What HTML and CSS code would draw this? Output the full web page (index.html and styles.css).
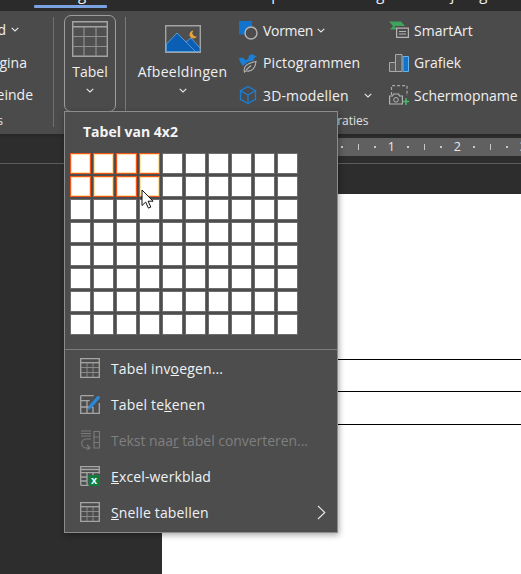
FILE: index.html
```html
<!DOCTYPE html>
<html lang="nl">
<head>
<meta charset="utf-8">
<title>Tabel invoegen</title>
<link rel="stylesheet" href="styles.css">
</head>
<body>
<div class="app">
  <div class="tabs">
    <span class="tab-frag f1">g</span><span class="tab-frag f2">p</span><span class="tab-frag f3">g</span><span class="tab-frag f4">j</span><span class="tab-frag f5">g</span>
    <i class="tab-bar"></i>
  </div>

  <div class="ribbon">
    <div class="pages">
      <div class="pages-row first">Voorblad<svg class="chev side" viewBox="0 0 8 5"><path d="M.7.8 4 4 7.3.8"/></svg></div>
      <div class="pages-row second">Lege pagina</div>
      <div class="pages-row">Pagina-einde</div>
      <div class="pages-label">Pagina's</div>
    </div>
    <i class="sep"></i>
    <div class="big-btn table-btn">
      <svg class="big-ico" width="36" height="36" viewBox="0 0 36 36"><path fill="#505050" d="M0 0h36v36H0z"/><path fill="none" stroke="#a3a3a3" stroke-width="1.4" d="M.7.7h34.6v34.6H.7zM.7 5.7h34.6"/><path fill="none" stroke="#8f8f8f" stroke-width="1.2" d="M12 6v29M24 6v29M1 15.500h34M1 25.500h34"/></svg>
      <span class="big-label">Tabel</span>
      <svg class="chev" viewBox="0 0 8 5"><path d="M.7.8 4 4 7.3.8"/></svg>
    </div>
    <i class="sep short"></i>
    <div class="big-btn pic-btn">
      <svg class="big-ico" width="36" height="28" viewBox="0 0 36 28"><path fill="#4f4f4f" stroke="#a3a3a3" stroke-width="1.4" d="M.7.7h34.600v26.600H.7z"/><path fill="#0a5fb4" stroke="#5ba3dc" stroke-width=".9" d="M1.500 26.500V19L12 8l9 9 5-4 9 10v3.500z"/><path stroke="#5ba3dc" fill="none" stroke-width=".9" d="M21 17l9.500 9.500"/><path fill="#e8a33d" d="M28.500 5.500a4 4 0 1 0 3.500 6 3.600 3.600 0 0 1-3.500-6z"/></svg>
      <span class="big-label">Afbeeldingen</span>
      <svg class="chev" viewBox="0 0 8 5"><path d="M.7.8 4 4 7.3.8"/></svg>
    </div>
    <div class="col col-a">
      <div class="cmd">
        <svg class="ico" width="20" height="20" viewBox="0 0 20 20"><path fill="#1173cc" d="M1 1h13v13.500H1z"/><path fill="#4c4c4c" d="M8 8h6v6.500H8z"/><circle cx="13" cy="13" r="6" fill="#4c4c4c" stroke="#b4b4b4" stroke-width="1.400"/></svg>
        <span class="t-vormen">Vormen</span><svg class="chev side2" viewBox="0 0 8 5"><path d="M.7.8 4 4 7.3.8"/></svg>
      </div>
      <div class="cmd">
        <svg class="ico" width="20" height="20" viewBox="0 0 20 20"><path fill="#1a7fd6" d="M1 5l4.500-.2 2 2.700L10.500 5.500 11 2.500 14.500 1l2 1.800L19 3.300l-2.500 1.500-1 2.700-6 1.500L5 13 2 9z"/><path fill="#4c4c4c" stroke="#b4b4b4" stroke-width="1.100" d="M6.500 19c-1.500-5 1.500-8.500 11.500-10.500-.5 6-4 10.500-9 9.500-1-.2-1.700 0-2.500 1zM8 17l5-4.500"/></svg>
        Pictogrammen
      </div>
      <div class="cmd">
        <svg class="ico" width="20" height="20" viewBox="0 0 20 20"><path fill="none" stroke="#1a7fd6" stroke-width="1.300" d="M10 1.500l7.500 4.200v8.600L10 18.500l-7.500-4.200V5.700zM2.500 5.700L10 10l7.500-4.300M10 10v8.500"/></svg>
        3D-modellen<svg class="chev side3" viewBox="0 0 8 5"><path d="M.7.8 4 4 7.300.8"/></svg>
      </div>
      <div class="group-label">Illustraties</div>
    </div>
    <div class="col col-b">
      <div class="cmd">
        <svg class="ico" width="20" height="20" viewBox="0 0 20 20"><path fill="#3da35d" d="M0 1.500h12l4 4.500H5.500L8 9.500H1l3-3.500z"/><path fill="#4c4c4c" stroke="#b4b4b4" stroke-width="1.200" d="M7.600 8.100h11.800v9.300H7.600z"/><path stroke="#b4b4b4" d="M10 11.500h7M10 14h7"/></svg>
        SmartArt
      </div>
      <div class="cmd">
        <svg class="ico" width="20" height="20" viewBox="0 0 20 20"><path fill="#5a5a5a" stroke="#a8a8a8" d="M.5 9.500h6v9h-6zM6.500 1.500h6.500v17H6.500z"/><path fill="#1173cc" stroke="#6cb0e6" d="M14 3.500h5.500v15H14z"/></svg>
        Grafiek
      </div>
      <div class="cmd">
        <svg class="ico" width="20" height="20" viewBox="0 0 20 20"><path fill="none" stroke="#a8a8a8" stroke-width="1.200" stroke-dasharray="3 2" d="M2.500 10V.6h15.500V11"/><path fill="#4c4c4c" stroke="#b4b4b4" stroke-width="1.200" d="M.6 11h3l1-2h5l1 2h2.800v8H.6z"/><circle cx="7" cy="14.800" r="2.300" fill="none" stroke="#b4b4b4"/><path stroke="#4fb86a" stroke-width="1.500" d="M17 13v7M13.500 16.500h6.500"/></svg>
        Schermopname
      </div>
    </div>
  </div>

  <div class="ruler-row">
    <div class="ruler">
      <span class="m dot"></span><span class="m tick"></span><span class="m dot"></span><span class="m num">1</span>
      <span class="m dot"></span><span class="m tick"></span><span class="m dot"></span><span class="m num">2</span>
      <span class="m dot"></span><span class="m tick"></span><span class="m dot"></span><span class="m num">3</span>
    </div>
  </div>
  <div class="hr-gap"></div>
  <div class="doc">
    <div class="sheet">
      <i class="rule r1"></i><i class="rule r2"></i><i class="rule r3"></i>
    </div>
  </div>

  <div class="popup">
    <div class="popup-title">Tabel van 4x2</div>
    <div class="grid" id="grid"></div>
    <div class="menu">
      <div class="item">
        <svg class="mi" width="20" height="20" viewBox="0 0 20 20"><use href="#t"/></svg>
        <span>Tabel inv<u>o</u>egen...</span>
      </div>
      <div class="item">
        <svg class="mi" width="20" height="20" viewBox="0 0 20 20"><path fill="none" stroke="#a6a6a6" stroke-width="1.300" d="M.7 1.700h13M.7 1.700v17.600h18.600V9M.7 6.700h9M7 7v12M13 13v6M1 13h12"/><path fill="#2b88d8" d="M8 16l1-4.500L17 2.500c1-1 3-.5 3 1.500L11.500 14z"/></svg>
        <span>Tabel te<u>k</u>enen</span>
      </div>
      <div class="item off">
        <svg class="mi" width="20" height="20" viewBox="0 0 20 20"><g fill="none" stroke="#7a7a7a" stroke-width="1.200"><path d="M1 1h10M1 3.500h10M1 6h10"/><path d="M11 9H6a4.500 4.500 0 0 0 .5 9H10M7 15l3 3-3 2"/><path d="M14 1.500h5.500v16.500H14zM14 7h5.500M14 12.500h5.500"/></g></svg>
        <span class="t-off">Tekst naa<u>r</u> tabel converteren...</span>
      </div>
      <div class="item">
        <svg class="mi" width="20" height="20" viewBox="0 0 20 20"><path fill="none" stroke="#a6a6a6" stroke-width="1.300" d="M.7 19.300V.7h18.600v7M.7 3.500h18.600M.7 6.700h18.600M7 7v12.300M1 11h6M1 15h6M.7 19.300H9M13 7v2"/><path fill="#107c41" d="M8.500 9H20v11H8.500z"/><text class="xl" x="14.200" y="18">x</text></svg>
        <span><u>E</u>xcel-werkblad</span>
      </div>
      <div class="item">
        <svg class="mi" width="20" height="20" viewBox="0 0 20 20"><use href="#t"/></svg>
        <span><u>S</u>nelle tabellen</span>
        <svg class="arrow" width="9" height="15" viewBox="0 0 9 15"><path fill="none" stroke="#e8e8e8" stroke-width="1.100" d="M1 1l6.800 6.500L1 14"/></svg>
      </div>
    </div>
  </div>

  <svg class="cursor" width="14" height="22" viewBox="0 0 14 22"><path fill="#fff" stroke="#111" stroke-width="1" d="M1 1v15.500l3.700-3.400 2.700 6 2.400-1-2.700-5.900h5z"/></svg>
</div>

<svg width="0" height="0" class="defs"><defs><g id="t"><path fill="none" stroke="#a6a6a6" stroke-width="1.300" d="M.7.7h18.600v18.600H.7z"/><path fill="none" stroke="#a6a6a6" stroke-width="1.300" d="M.7 4.700h18.600"/><path fill="none" stroke="#8a8a8a" d="M7 5v14M13 5v14M1 9.500h18M1 14.500h18"/></g></defs></svg>

<script src="grid.js"></script>
</body>
</html>
```

FILE: grid.js
```js
var g = document.getElementById('grid');
for (var r = 0; r < 8; r++) {
  for (var c = 0; c < 10; c++) {
    var d = document.createElement('i');
    d.className = (r < 2 && c < 4) ? 'cell on' : 'cell';
    g.appendChild(d);
  }
}
```

FILE: styles.css
```css
* { box-sizing: border-box; }
html, body { margin: 0; padding: 0; }
body { width: 521px; height: 574px; overflow: hidden; background: #2d2d2d; }
.defs { position: absolute; }
.app {
  position: relative;
  width: 521px;
  height: 574px;
  overflow: hidden;
  font-family: "Open Sans", "Noto Sans", sans-serif;
  font-size: 14px;
  color: #f0f0f0;
  display: flex;
  flex-direction: column;
}

/* clipped tab strip */
.tabs {
  position: relative;
  height: 11px;
  flex: none;
  background: #2b2b2b;
  overflow: hidden;
  display: flex;
}
.tab-frag { font-size: 15px; line-height: 10px; margin-top: -11px; color: #f0f0f0; height: 12px; }
.f1 { margin-left: 78px; }
.f2 { margin-left: 185px; }
.f3 { margin-left: 96px; }
.f4 { margin-left: 66px; }
.f5 { margin-left: 25px; }
.tab-bar { position: absolute; left: 34px; top: 5px; width: 73px; height: 3px; background: #7ba3e2; border-radius: 1px; }

/* ribbon */
.ribbon {
  position: relative;
  height: 123px;
  flex: none;
  background: #4b4b4b;
  display: flex;
  align-items: flex-start;
}
.pages {
  flex: none;
  width: 33px;
  margin-right: 20px;
  padding-top: 3px;
  display: flex;
  flex-direction: column;
  align-items: flex-end;
  overflow: hidden;
  height: 123px;
  white-space: nowrap;
}
.pages-row { height: 32.500px; line-height: 32px; flex: none; display: flex; align-items: center; }
.pages-row.first { padding-right: 27px; position: relative; }
.pages-row.second { padding-right: 6px; }
.pages-label { font-size: 12px; line-height: 16px; margin-top: 1px; color: #e0e0e0; padding-right: 30px; }
.sep { flex: none; width: 1px; height: 110px; margin-top: 6px; background: #6f6f6f; }
.sep.short { height: 94px; margin-top: 6px; background: #7a7a7a; }
.big-btn { flex: none; display: flex; flex-direction: column; align-items: center; }
.table-btn {
  width: 52px;
  height: 97px;
  margin: 4px 9px 0 10px;
  padding-top: 5px;
  border: 1px solid #9d9d9d;
  border-radius: 7px;
}
.pic-btn { width: 112px; padding-top: 14px; padding-left: 1px; }
.big-ico { flex: none; display: block; }
.table-btn .big-label { margin-top: 5px; }
.pic-btn .big-label { margin-top: 9px; letter-spacing: .3px; }
.big-label { line-height: 20px; white-space: nowrap; }
.chev { width: 8px; height: 5px; margin-top: 6px; fill: none; stroke: #e8e8e8; stroke-width: 1.100; flex: none; }
.chev.side { position: absolute; right: 14px; top: 13px; margin: 0; }
.chev.side2 { margin: 0 0 0 4px; }
.chev.side3 { margin: 0 0 0 15px; }
.col { flex: none; padding-top: 3px; position: relative; }
.col-a { width: 151px; letter-spacing: .15px; }
.col-b { width: 140px; }
.cmd { height: 32.500px; display: flex; align-items: center; white-space: nowrap; }
.t-vormen { letter-spacing: -.3px; }
.ico { flex: none; margin-right: 5px; }
.group-label { font-size: 12px; line-height: 16px; margin-top: 1px; color: #e0e0e0; text-align: center; white-space: nowrap; width: 203px; letter-spacing: 0; }

/* ruler */
.ruler-row { flex: none; height: 22px; padding-top: 4px; padding-left: 162px; background: linear-gradient(#262626, #2d2d2d 4px); }
.ruler { height: 18px; background: #606060; display: flex; align-items: center; padding-left: 179.500px; }
.m { flex: none; width: 16.500px; display: flex; justify-content: center; align-items: center; font-size: 12.500px; color: #e8e8e8; height: 18px; line-height: 18px; transform: translateX(-8px); }
.dot::before { content: ""; width: 2px; height: 2px; background: #c8c8c8; }
.tick::before { content: ""; width: 1px; height: 6px; background: #c8c8c8; }

.hr-gap { flex: none; height: 8px; border-bottom: 1px solid #5d5d5d; background: #2d2d2d; }
.doc { flex: 1; padding: 30px 0 0 162px; background: #2d2d2d; }
.sheet { height: 380px; background: #fff; display: flex; flex-direction: column; }
.rule { display: block; height: 1px; background: #000; flex: none; }
.r1 { margin-top: 165px; }
.r2 { margin-top: 31px; }
.r3 { margin-top: 32px; }

/* dropdown */
.popup {
  position: absolute;
  left: 64px;
  top: 111px;
  width: 274px;
  height: 422px;
  background: #4d4d4d;
  border: 1px solid #8b8b8b;
  box-shadow: 1px 2px 6px rgba(0,0,0,.35);
  color: #f4f4f4;
}
.popup-title { font-weight: 700; font-size: 14px; line-height: 20px; padding: 10px 0 0 18px; }
.grid {
  margin: 11px 0 0 5px;
  display: grid;
  grid-template-columns: repeat(10, 21px);
  grid-auto-rows: 21px;
  gap: 2px;
}
.cell { display: block; background: #fff; border: 1px solid #6d6d6d; }
.cell.on { border-color: #f0561a; box-shadow: inset 0 0 0 1px #fde1a9; }
.menu { margin-top: 14px; border-top: 1px solid #7c7c7c; letter-spacing: .15px; }
.item { height: 36px; display: flex; align-items: center; padding-left: 15px; position: relative; white-space: nowrap; color: #eef2f6; }
.mi { flex: none; margin-right: 11px; }
.off { color: #7f7f7f; }
.t-off { letter-spacing: -.05px; }
.arrow { position: absolute; right: 11px; top: 11px; }
.xl { font: 700 11px "Liberation Sans", sans-serif; fill: #fff; text-anchor: middle; }
.cursor { position: absolute; left: 141px; top: 189px; }
```
